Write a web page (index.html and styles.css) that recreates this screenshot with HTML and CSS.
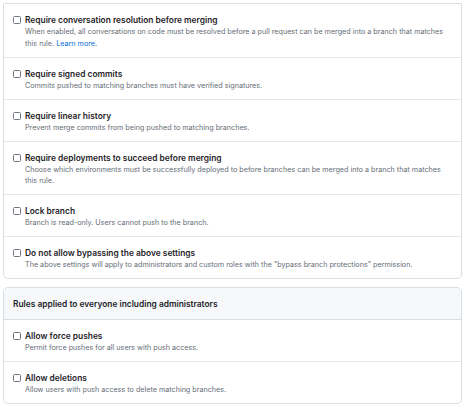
FILE: index.html
```html
<!DOCTYPE html>
<html lang="en">
<head>
    <meta charset="UTF-8">
    <title>Branch protection rule</title>
    <link rel="stylesheet" href="styles.css">
</head>
<body>
    <div class="rule-box rule-box-cut">
        <div class="rule">
            <span class="check"></span>
            <div class="rule-text">
                <div class="rule-title">Require conversation resolution before merging</div>
                <div class="rule-desc">When enabled, all conversations on code must be resolved before a pull request can be merged into a branch that matches this rule. <a href="#">Learn more.</a></div>
            </div>
        </div>
        <div class="rule">
            <span class="check"></span>
            <div class="rule-text">
                <div class="rule-title">Require signed commits</div>
                <div class="rule-desc">Commits pushed to matching branches must have verified signatures.</div>
            </div>
        </div>
        <div class="rule">
            <span class="check"></span>
            <div class="rule-text">
                <div class="rule-title">Require linear history</div>
                <div class="rule-desc">Prevent merge commits from being pushed to matching branches.</div>
            </div>
        </div>
        <div class="rule">
            <span class="check"></span>
            <div class="rule-text">
                <div class="rule-title">Require deployments to succeed before merging</div>
                <div class="rule-desc">Choose which environments must be successfully deployed to before branches can be merged into a branch that matches this rule.</div>
            </div>
        </div>
        <div class="rule">
            <span class="check"></span>
            <div class="rule-text">
                <div class="rule-title">Lock branch</div>
                <div class="rule-desc">Branch is read-only. Users cannot push to the branch.</div>
            </div>
        </div>
        <div class="rule">
            <span class="check"></span>
            <div class="rule-text">
                <div class="rule-title">Do not allow bypassing the above settings</div>
                <div class="rule-desc">The above settings will apply to administrators and custom roles with the "bypass branch protections" permission.</div>
            </div>
        </div>
    </div>

    <div class="rule-box">
        <div class="rule-head">Rules applied to everyone including administrators</div>
        <div class="rule">
            <span class="check"></span>
            <div class="rule-text">
                <div class="rule-title">Allow force pushes</div>
                <div class="rule-desc">Permit force pushes for all users with push access.</div>
            </div>
        </div>
        <div class="rule">
            <span class="check"></span>
            <div class="rule-text">
                <div class="rule-title">Allow deletions</div>
                <div class="rule-desc">Allow users with push access to delete matching branches.</div>
            </div>
        </div>
    </div>
</body>
</html>
```

FILE: styles.css
```css
body {
    margin: 3px 12px 0 3px;
    font-family: Inter, "Noto Sans", sans-serif;
    color: #1f2328;
    background-color: #ffffff;
}

.rule-box {
    border: 1px solid #d8dee4;
    border-radius: 5px;
    margin-bottom: 8px;
}

/* the page is scrolled, the top of this box is out of view */
.rule-box-cut {
    border-top-left-radius: 0;
    border-top-right-radius: 0;
}

.rule-head {
    background-color: #f6f8fa;
    border-bottom: 1px solid #d8dee4;
    border-radius: 5px 5px 0 0;
    padding: 9px 9px 8px 9px;
    font-size: 8.4px;
    font-weight: 600;
    line-height: 14px;
}

.rule {
    display: flex;
    align-items: flex-start;
    padding: 9px 8px 7.5px 9px;
    border-bottom: 1px solid #e4e8ec;
}

.rule:last-child {
    border-bottom: none;
}

.check {
    flex: none;
    width: 6px;
    height: 6px;
    margin: 3px 4px 0 0;
    border: 1px solid #6e7781;
    border-radius: 1.5px;
}

.rule-title {
    font-size: 8.4px;
    font-weight: 600;
    line-height: 14px;
}

.rule-desc {
    margin-top: -1px;
    font-size: 7.2px;
    line-height: 11.5px;
    color: #656d76;
}

.rule-desc a {
    color: #0969da;
    text-decoration: none;
}
```
